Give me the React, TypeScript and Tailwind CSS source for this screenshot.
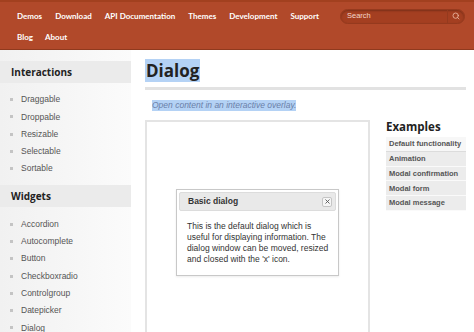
import { Search, X } from 'lucide-react'

const interactions = ['Draggable', 'Droppable', 'Resizable', 'Selectable', 'Sortable']
const widgets = ['Accordion', 'Autocomplete', 'Button', 'Checkboxradio', 'Controlgroup', 'Datepicker', 'Dialog']
const examples = ['Default functionality', 'Animation', 'Modal confirmation', 'Modal form', 'Modal message']
const navTop = ['Demos', 'Download', 'API Documentation', 'Themes', 'Development', 'Support']

function SideSection({ title, items }: { title: string; items: string[] }) {
  return (
    <div>
      <div className="h-[22px] flex items-center pl-[11px] bg-[#ebebeb] font-['Open_Sans'] font-bold text-[10px] text-[#222]">
        {title}
      </div>
      <ul className="pt-[8px] pb-[8px]">
        {items.map((item) => (
          <li key={item} className="h-[17.3px] flex items-center pl-[10px] text-[8.5px] text-[#555]">
            <span className="w-[3px] h-[3px] bg-[#c4c4c4] mr-[8px]" />
            {item}
          </li>
        ))}
      </ul>
    </div>
  )
}

export default function App() {
  return (
    <div className="w-[474px] h-[332px] overflow-hidden bg-white font-['Liberation_Sans',Arial,sans-serif]">
      <header className="h-[50px] bg-[#b1492a] border-t-[2px] border-t-[#a2401f] border-b border-b-[#8f3a1e] font-['Lato',sans-serif] font-bold text-[8px] text-white">
        <div className="flex items-center h-[28px] pl-[17px] pr-[9px]">
          <nav className="flex gap-[13px]">
            {navTop.map((n) => (
              <span key={n}>{n}</span>
            ))}
          </nav>
          <div className="ml-auto w-[125px] h-[15px] rounded-full bg-[#a43f21] border border-[#953a1e] shadow-[inset_0_1px_2px_rgba(0,0,0,0.25)] flex items-center pl-[6px] pr-[4px]">
            <span className="font-['Liberation_Sans',sans-serif] font-normal text-[7.5px] text-[#f3d6c9]">Search</span>
            <span className="ml-auto h-full border-l border-[#953a1e] pl-[4px] flex items-center text-[#e9b8a4]">
              <Search size={8} strokeWidth={2.5} />
            </span>
          </div>
        </div>
        <nav className="flex gap-[12px] pl-[17px] pt-[1px]">
          <span>Blog</span>
          <span>About</span>
        </nav>
      </header>

      <div className="flex">
        <aside className="w-[131px] h-[282px] pt-[11px] bg-gradient-to-r from-[#f1f1f1] to-[#fbfbfb]">
          <SideSection title="Interactions" items={interactions} />
          <SideSection title="Widgets" items={widgets} />
        </aside>

        <main className="ml-[14px] w-[321px] pt-[9px]">
          <h1 className="w-fit bg-[#b4d2f5] px-[1px] h-[23px] leading-[23px] font-['Open_Sans',sans-serif] font-bold text-[17px] text-[#222]">
            Dialog
          </h1>
          <div className="mt-[5px] h-[3px] bg-[#e2e2e2]" />
          <p className="mt-[10px] ml-[7px] w-fit bg-[#b4d2f5] italic text-[8.5px] leading-[11px] text-[#6b7fa8]">
            Open content in an interactive overlay.
          </p>

          <div className="flex mt-[9px]">
            <div className="w-[225px] h-[230px] border-2 border-[#e4e4e4] pt-[67px] pl-[29px]">
              <div className="w-[163px] h-[87px] border border-[#c8c8c8] bg-white p-[2px] shadow-[0_1px_2px_rgba(0,0,0,0.08)]">
                <div className="h-[19px] flex items-center pl-[8px] pr-[3px] bg-[#e9e9e9] border border-[#dcdcdc] rounded-[2px] font-bold text-[8.5px] text-[#333]">
                  Basic dialog
                  <span className="ml-auto w-[10px] h-[10px] bg-[#f6f6f6] border border-[#c5c5c5] rounded-[2px] flex items-center justify-center text-[#555]">
                    <X size={7} strokeWidth={3} />
                  </span>
                </div>
                <p className="pt-[10px] pl-[8px] pr-[1px] text-[8.5px] leading-[11px] text-[#333]">
                  This is the default dialog which is useful for displaying information. The dialog window can be moved, resized and closed with the 'x' icon.
                </p>
              </div>
            </div>

            <div className="ml-[16px] w-[80px]">
              <h2 className="font-['Open_Sans',sans-serif] font-bold text-[11.5px] leading-[16px] text-[#222] mt-[-1px]">
                Examples
              </h2>
              <ul className="mt-[2px] font-['Liberation_Sans',sans-serif] font-bold text-[7.5px] text-[#555]">
                {examples.map((e, i) => (
                  <li
                    key={e}
                    className={`h-[14.8px] flex items-center pl-[3px] border-b border-[#fafafa] ${i === 0 ? 'bg-[#f7f7f7] border-b-[#dcdcdc]' : 'bg-[#ececec]'}`}
                  >
                    {e}
                  </li>
                ))}
              </ul>
            </div>
          </div>
        </main>
      </div>
    </div>
  )
}
